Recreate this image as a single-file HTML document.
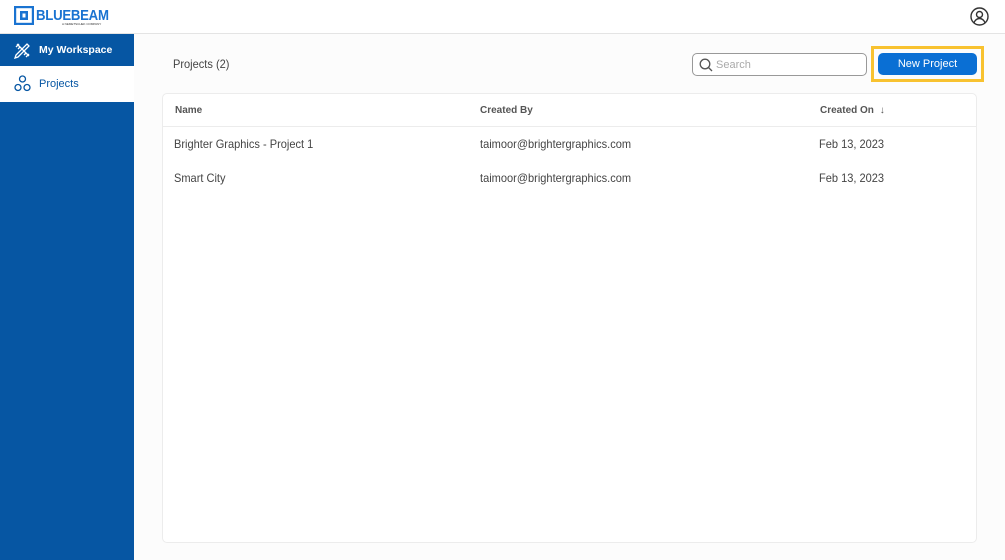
<!DOCTYPE html>
<html><head><style>
*{margin:0;padding:0;box-sizing:border-box}
body{width:1005px;height:560px;overflow:hidden;font-family:"Liberation Sans",Arial,sans-serif;background:#fcfcfc;position:relative;color:#333}
.hdr{position:absolute;left:0;top:0;width:1005px;height:34px;background:#fff;border-bottom:1px solid #e4e4e4}
.side{position:absolute;left:0;top:34px;width:134px;height:526px;background:#0656a3}
.nav1{position:absolute;left:0;top:34px;width:134px;height:32px;background:#0656a3;color:#fff;font-weight:bold;font-size:10.5px}
.nav2{position:absolute;left:0;top:66px;width:134px;height:36px;background:#fff;color:#0656a3;font-size:11px}
.card{position:absolute;left:162px;top:93px;width:815px;height:450px;background:#fff;border:1px solid #ececec;border-radius:5px}
.th{position:absolute;top:104px;font-size:10px;font-weight:bold;color:#555}
.td{position:absolute;font-size:12px;color:#444;transform:scaleX(.92);transform-origin:left;white-space:nowrap}
</style></head><body>
<div class="hdr">
<svg style="position:absolute;left:14px;top:6px" width="20" height="19"><rect x="1" y="1" width="18" height="17" fill="none" stroke="#1a73d1" stroke-width="2.4"/><rect x="6" y="5" width="8" height="9" fill="#1a73d1"/><rect x="8.5" y="7.5" width="3" height="4" fill="#fff"/></svg>
<div style="position:absolute;left:36px;top:7px;font-size:15px;font-weight:bold;color:#1a73d1;letter-spacing:-0.3px;transform:scaleX(.88);transform-origin:left">BLUEBEAM</div>
<div style="position:absolute;left:62px;top:22px;font-size:3px;color:#333">A NEMETSCHEK COMPANY</div>
<svg style="position:absolute;left:970px;top:7px" width="19" height="19" fill="none" stroke="#333" stroke-width="1.4"><circle cx="9.5" cy="9.5" r="8.5"/><circle cx="9.5" cy="7.5" r="3"/><path d="M4 15.5c1.5-3 3.5-4 5.5-4s4 1 5.5 4"/></svg>
</div>
<div class="side"></div>
<div class="nav1"><svg style="position:absolute;left:14px;top:8px" width="17" height="17" fill="none" stroke="#fff" stroke-width="1.3"><path d="M2 13l11-11 2 2-11 11-3 1z"/><path d="M3 2l12 12M2 5l3-3M12 15l3-3M6 5l-2 2M12 11l-2 2"/></svg><span style="position:absolute;left:39px;top:10px">My Workspace</span></div>
<div class="nav2"><svg style="position:absolute;left:14px;top:9px" width="17" height="17" fill="none" stroke="#0656a3" stroke-width="1.3"><circle cx="8.5" cy="4" r="3"/><circle cx="4" cy="12.5" r="3"/><circle cx="13" cy="12.5" r="3"/></svg><span style="position:absolute;left:39px;top:12px">Projects</span></div>
<div class="td" style="left:173px;top:57px">Projects (2)</div>
<div style="position:absolute;left:692px;top:53px;width:175px;height:23px;border:1px solid #999;border-radius:5px;background:#fff">
<svg style="position:absolute;left:6px;top:4px" width="14" height="14" fill="none" stroke="#555" stroke-width="1.3"><circle cx="6" cy="6" r="4.8"/><path d="M9.5 9.5l3.5 3.5"/></svg>
<span style="position:absolute;left:23px;top:5px;font-size:11px;color:#aaa">Search</span></div>
<div style="position:absolute;left:871px;top:46px;width:113px;height:36px;border:3px solid #f8c230"></div>
<div style="position:absolute;left:878px;top:53px;width:99px;height:22px;background:#0a6fd4;border-radius:5px;color:#fff;font-size:11px;text-align:center;line-height:22px">New Project</div>
<div class="card"><div style="position:absolute;left:0;top:32px;width:100%;border-top:1px solid #ececec"></div></div>
<div class="th" style="left:175px;top:105px">Name</div>
<div class="th" style="left:480px;top:105px">Created By</div>
<div class="th" style="left:820px;top:105px">Created On <span style="font-weight:normal;margin-left:3px">↓</span></div>
<div class="td" style="left:174px;top:137px">Brighter Graphics - Project 1</div>
<div class="td" style="left:480px;top:137px">taimoor@brightergraphics.com</div>
<div class="td" style="left:819px;top:137px">Feb 13, 2023</div>
<div class="td" style="left:174px;top:171px">Smart City</div>
<div class="td" style="left:480px;top:171px">taimoor@brightergraphics.com</div>
<div class="td" style="left:819px;top:171px">Feb 13, 2023</div>
</body></html>
